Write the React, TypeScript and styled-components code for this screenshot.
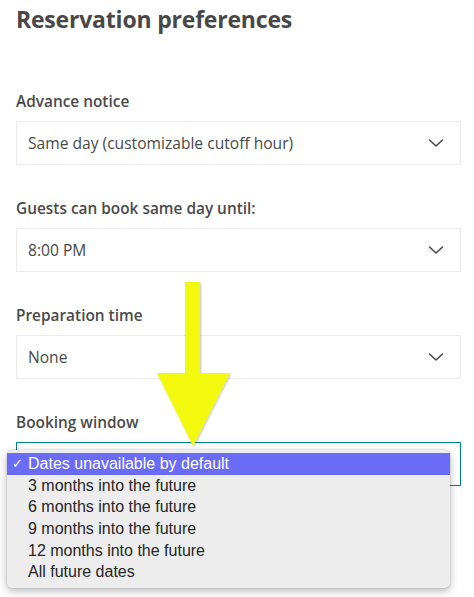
import styled, { createGlobalStyle } from 'styled-components';

const GlobalStyle = createGlobalStyle`
  html, body {
    margin: 0;
    padding: 0;
    background: #ffffff;
  }
  body {
    font-family: 'Open Sans', 'Liberation Sans', sans-serif;
    color: #484848;
  }
`;

type Field = {
  label: string;
  value: string;
  focused?: boolean;
};

const FIELDS: Field[] = [
  { label: 'Advance notice', value: 'Same day (customizable cutoff hour)' },
  { label: 'Guests can book same day until:', value: '8:00 PM' },
  { label: 'Preparation time', value: 'None' },
  { label: 'Booking window', value: '', focused: true },
];

const WINDOW_OPTIONS = [
  'Dates unavailable by default',
  '3 months into the future',
  '6 months into the future',
  '9 months into the future',
  '12 months into the future',
  'All future dates',
];

const App = () => {
  return (
    <>
      <GlobalStyle />
      <Page>
        <Title>Reservation preferences</Title>
        <FieldList>
          {FIELDS.map((field) => (
            <FieldGroup key={field.label}>
              <Label>{field.label}</Label>
              <SelectBox focused={!!field.focused}>
                <SelectValue>{field.value}</SelectValue>
                {!field.focused && <Chevron />}
                {field.focused && <OptionMenu />}
              </SelectBox>
            </FieldGroup>
          ))}
        </FieldList>
        <Pointer />
      </Page>
    </>
  );
};

export default App;

const Chevron = () => (
  <ChevronIcon viewBox="0 0 16 16" width="16" height="16">
    <path d="M1.5 5 L8 11 L14.5 5" fill="none" stroke="#484848" strokeWidth="1.6" strokeLinecap="round" strokeLinejoin="round" />
  </ChevronIcon>
);

const OptionMenu = () => (
  <Menu>
    {WINDOW_OPTIONS.map((opt, idx) => (
      <MenuItem key={opt} selected={idx === 0}>
        <Check>{idx === 0 ? '✓' : ''}</Check>
        {opt}
      </MenuItem>
    ))}
  </Menu>
);

// big yellow annotation arrow pointing at the booking window select
const Pointer = () => (
  <PointerSvg width="474" height="597" viewBox="0 0 474 597">
    <defs>
      <filter id="arrowShadow" x="-20%" y="-20%" width="140%" height="140%">
        <feDropShadow dx="1" dy="1" stdDeviation="1.2" floodColor="#000" floodOpacity="0.25" />
      </filter>
    </defs>
    <polygon
      points="185,282 200,282 200,373 230,373 193,446 157,373 185,373"
      fill="#f3f90c"
      filter="url(#arrowShadow)"
    />
  </PointerSvg>
);

const Page = styled.div`
  position: relative;
  width: 474px;
  height: 597px;
  box-sizing: border-box;
  padding: 3px 13px 0 16px;
  overflow: hidden;
`;

const Title = styled.h1`
  margin: 0;
  font-size: 23px;
  line-height: 32px;
  font-weight: 700;
  color: #484848;
  letter-spacing: -0.2px;
`;

const FieldList = styled.div`
  display: flex;
  flex-direction: column;
  gap: 33px;
  margin-top: 56px;
`;

const FieldGroup = styled.div`
  display: flex;
  flex-direction: column;
  gap: 8px;
`;

const Label = styled.div`
  font-size: 15.4px;
  line-height: 22px;
  font-weight: 600;
  color: #4a4a4a;
`;

const SelectBox = styled.div<{ focused: boolean }>`
  position: relative;
  height: 44px;
  box-sizing: border-box;
  border: 1px solid ${(p) => (p.focused ? '#008489' : '#ebebeb')};
  background: #ffffff;
  display: flex;
  align-items: center;
  justify-content: space-between;
  padding: 0 16px 0 11px;
`;

const SelectValue = styled.span`
  font-size: 15.6px;
  color: #484848;
`;

const ChevronIcon = styled.svg`
  display: block;
  flex-shrink: 0;
`;

const Menu = styled.div`
  position: absolute;
  left: -10px;
  top: 7px;
  width: 443px;
  box-sizing: border-box;
  padding: 3px 0 5px;
  background: #ededed;
  border-radius: 5px;
  box-shadow: 0 3px 8px rgba(0, 0, 0, 0.28), 0 0 0 0.5px rgba(0, 0, 0, 0.12);
  z-index: 5;
`;

const MenuItem = styled.div<{ selected: boolean }>`
  display: flex;
  align-items: center;
  height: 21.7px;
  padding-left: 5px;
  font-family: 'Liberation Sans', Arial, sans-serif;
  font-size: 16px;
  color: ${(p) => (p.selected ? '#ffffff' : '#262626')};
  background: ${(p) => (p.selected ? '#6a6cf8' : 'transparent')};
`;

const Check = styled.span`
  width: 16px;
  font-size: 13px;
  font-family: 'DejaVu Sans', sans-serif;
`;

const PointerSvg = styled.svg`
  position: absolute;
  left: 0;
  top: 0;
  pointer-events: none;
  z-index: 10;
`;
